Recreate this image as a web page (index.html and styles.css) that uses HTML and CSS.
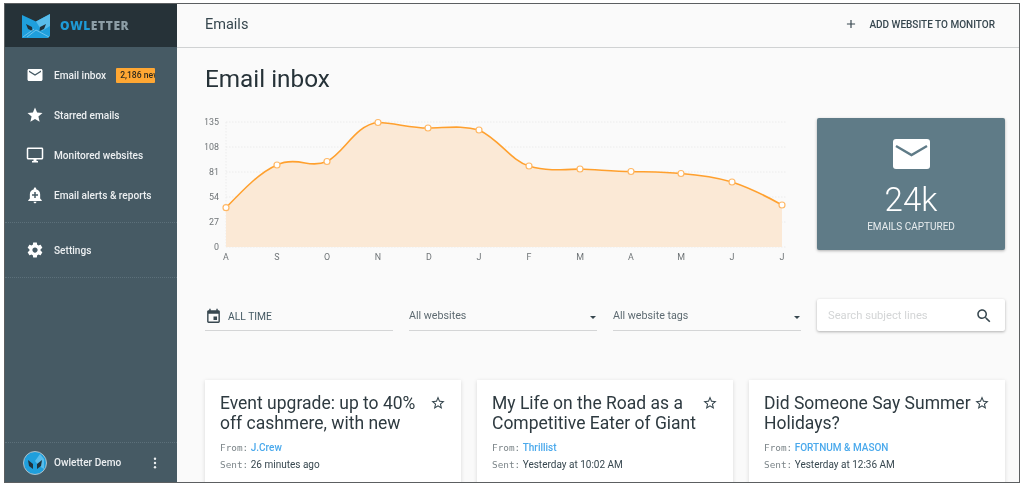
FILE: index.html
```html
<!DOCTYPE html>
<html lang="en">
<head>
    <meta charset="UTF-8">
    <meta name="viewport" content="width=device-width, initial-scale=1.0">
    <title>Owletter - Email inbox</title>
    <link rel="stylesheet" href="styles.css">
</head>
<body>
    <div class="frame">
        <aside class="sidebar">
            <div class="brand">
                <svg class="brand-logo" viewBox="0 0 28 24">
                    <polygon points="0,1 14,7.5 28,0 28,22 26,24 0,24" fill="#1f9fdc"/>
                    <polygon points="14,7.5 28,0 28,12 20,17" fill="#58bdec"/>
                    <polygon points="4,10 10,13 10.5,17 6,15" fill="#21323b"/>
                    <polygon points="24,10 18,13 17.5,17 22,15" fill="#21323b"/>
                    <path d="M1 23 L12 15 M5 23 L14 16 L27 23" fill="none" stroke="#8fd3f2" stroke-width=".7"/>
                </svg>
                <span class="brand-name"><b>OWL</b>ETTER</span>
            </div>
            <nav class="nav">
                <a class="nav-item">
                    <svg class="nav-icon" viewBox="0 0 24 24"><path d="M20 4H4c-1.1 0-1.99.9-1.99 2L2 18c0 1.1.9 2 2 2h16c1.1 0 2-.9 2-2V6c0-1.1-.9-2-2-2zm0 4l-8 5-8-5V6l8 5 8-5v2z"/></svg>
                    <span>Email inbox</span>
                    <span class="badge">2,186 new</span>
                </a>
                <a class="nav-item">
                    <svg class="nav-icon" viewBox="0 0 24 24"><path d="M12 17.27L18.18 21l-1.64-7.03L22 9.24l-7.19-.61L12 2 9.19 8.63 2 9.24l5.46 4.73L5.82 21z"/></svg>
                    <span>Starred emails</span>
                </a>
                <a class="nav-item">
                    <svg class="nav-icon" viewBox="0 0 24 24"><path d="M21 2H3c-1.1 0-2 .9-2 2v12c0 1.1.9 2 2 2h7v2H8v2h8v-2h-2v-2h7c1.1 0 2-.9 2-2V4c0-1.1-.9-2-2-2zm0 14H3V4h18v12z"/></svg>
                    <span>Monitored websites</span>
                </a>
                <a class="nav-item">
                    <svg class="nav-icon" viewBox="0 0 24 24"><path d="M10.01 21.01c0 1.1.89 1.99 1.99 1.99s1.99-.89 1.99-1.99h-3.98zm8.87-4.19V11c0-3.25-2.25-5.97-5.29-6.69v-.72C13.59 2.71 12.88 2 12 2s-1.59.71-1.59 1.59v.72C7.37 5.03 5.12 7.75 5.12 11v5.82L3 18.94V20h18v-1.06l-2.12-2.12zM16 13.01h-3v3h-2v-3H8V11h3V8h2v3h3v2.01z"/></svg>
                    <span>Email alerts &amp; reports</span>
                </a>
            </nav>
            <nav class="nav nav-settings">
                <a class="nav-item">
                    <svg class="nav-icon" viewBox="0 0 24 24"><path d="M19.43 12.98c.04-.32.07-.64.07-.98s-.03-.66-.07-.98l2.11-1.65c.19-.15.24-.42.12-.64l-2-3.46c-.12-.22-.39-.3-.61-.22l-2.49 1c-.52-.4-1.08-.73-1.69-.98l-.38-2.65C14.46 2.18 14.25 2 14 2h-4c-.25 0-.46.18-.49.42l-.38 2.65c-.61.25-1.17.59-1.69.98l-2.49-1c-.23-.09-.49 0-.61.22l-2 3.46c-.13.22-.07.49.12.64l2.11 1.65c-.04.32-.07.65-.07.98s.03.66.07.98l-2.11 1.65c-.19.15-.24.42-.12.64l2 3.46c.12.22.39.3.61.22l2.49-1c.52.4 1.08.73 1.69.98l.38 2.65c.03.24.24.42.49.42h4c.25 0 .46-.18.49-.42l.38-2.65c.61-.25 1.17-.59 1.69-.98l2.49 1c.23.09.49 0 .61-.22l2-3.46c.12-.22.07-.49-.12-.64l-2.11-1.65zM12 15.5c-1.93 0-3.5-1.57-3.5-3.5s1.57-3.5 3.5-3.5 3.5 1.57 3.5 3.5-1.57 3.5-3.5 3.5z"/></svg>
                    <span>Settings</span>
                </a>
            </nav>
            <div class="account">
                <svg class="avatar" viewBox="0 0 24 24">
                    <circle cx="12" cy="12" r="11.5" fill="#1f9fdc" stroke="#b0bec5"/>
                    <polygon points="12,10 17,3 21,8 21,18 16,15" fill="#58bdec"/>
                    <polygon points="5,9 10,13 10,18 6,15" fill="#21323b"/>
                    <polygon points="19,9 14,13 14,18 18,15" fill="#21323b"/>
                </svg>
                <span class="account-name">Owletter Demo</span>
                <svg class="account-more" viewBox="0 0 4 14"><circle cx="2" cy="2" r="1.4"/><circle cx="2" cy="7" r="1.4"/><circle cx="2" cy="12" r="1.4"/></svg>
            </div>
        </aside>

        <main class="main">
            <header class="topbar">
                <div class="topbar-title">Emails</div>
                <a class="topbar-action">
                    <svg class="topbar-plus" viewBox="0 0 24 24"><path d="M19 13h-6v6h-2v-6H5v-2h6V5h2v6h6v2z"/></svg>
                    ADD WEBSITE TO MONITOR
                </a>
            </header>

            <div class="content">
                <h1 class="page-title">Email inbox</h1>

                <section class="stats-row">
                    <svg class="chart" width="585" height="156" viewBox="205 110 585 156">
                        <g class="chart-grid">
                            <line x1="226" x2="786" y1="122" y2="122"/>
                            <line x1="226" x2="786" y1="147" y2="147"/>
                            <line x1="226" x2="786" y1="172" y2="172"/>
                            <line x1="226" x2="786" y1="197" y2="197"/>
                            <line x1="226" x2="786" y1="222" y2="222"/>
                            <line x1="226" x2="786" y1="247" y2="247"/>
                            <line x1="226" x2="226" y1="122" y2="247"/>
                        </g>
                        <path class="chart-area" d="M226 207.7 C243 190 260 172 277 165 C285 161 295 161 305 163 C313 164.5 320 164.5 327 161.5 C345 152 355 125 378 122.5 C395 123 410 128 428 128 C445 128 462 125 479 130 C500 140 510 160 529 166 C545 171 560 170 580 169 C597 169.5 614 171.5 631 171.5 C648 172 665 172 681 173.5 C700 175 715 177 732 182 C750 188 766 196 782 205 L782 247 L226 247 Z"/>
                        <path class="chart-line" d="M226 207.7 C243 190 260 172 277 165 C285 161 295 161 305 163 C313 164.5 320 164.5 327 161.5 C345 152 355 125 378 122.5 C395 123 410 128 428 128 C445 128 462 125 479 130 C500 140 510 160 529 166 C545 171 560 170 580 169 C597 169.5 614 171.5 631 171.5 C648 172 665 172 681 173.5 C700 175 715 177 732 182 C750 188 766 196 782 205"/>
                        <g class="chart-dots">
                            <circle cx="226" cy="207.7" r="3"/>
                            <circle cx="277" cy="165" r="3"/>
                            <circle cx="327" cy="161.5" r="3"/>
                            <circle cx="378" cy="122.5" r="3"/>
                            <circle cx="428" cy="128" r="3"/>
                            <circle cx="479" cy="130" r="3"/>
                            <circle cx="529" cy="166" r="3"/>
                            <circle cx="580" cy="169" r="3"/>
                            <circle cx="631" cy="171.5" r="3"/>
                            <circle cx="681" cy="173.5" r="3"/>
                            <circle cx="732" cy="182" r="3"/>
                            <circle cx="782" cy="205" r="3"/>
                        </g>
                        <g class="chart-y">
                            <text x="219" y="125">135</text>
                            <text x="219" y="150">108</text>
                            <text x="219" y="175">81</text>
                            <text x="219" y="200">54</text>
                            <text x="219" y="225">27</text>
                            <text x="219" y="250">0</text>
                        </g>
                        <g class="chart-x">
                            <text x="226" y="260">A</text>
                            <text x="277" y="260">S</text>
                            <text x="327" y="260">O</text>
                            <text x="378" y="260">N</text>
                            <text x="429" y="260">D</text>
                            <text x="479" y="260">J</text>
                            <text x="529" y="260">F</text>
                            <text x="580" y="260">M</text>
                            <text x="631" y="260">A</text>
                            <text x="681" y="260">M</text>
                            <text x="732" y="260">J</text>
                            <text x="782" y="260">J</text>
                        </g>
                    </svg>
                    <div class="stat-card">
                        <svg class="stat-icon" viewBox="0 0 37 30">
                            <rect width="37" height="30" rx="3" fill="#fff"/>
                            <path d="M3 7 L18.5 16 L34 7" fill="none" stroke="#5f7b87" stroke-width="2.4"/>
                        </svg>
                        <div class="stat-value">24k</div>
                        <div class="stat-label">EMAILS CAPTURED</div>
                    </div>
                </section>

                <section class="filters">
                    <div class="filter filter-date">
                        <svg class="filter-icon" viewBox="0 0 24 24"><path d="M17 12h-5v5h5v-5zM16 1v2H8V1H6v2H5c-1.11 0-1.99.9-1.99 2L3 19c0 1.1.89 2 2 2h14c1.1 0 2-.9 2-2V5c0-1.1-.9-2-2-2h-1V1h-2zm3 18H5V8h14v11z"/></svg>
                        ALL TIME
                    </div>
                    <div class="filter filter-select">All websites<span class="caret"></span></div>
                    <div class="filter filter-select">All website tags<span class="caret"></span></div>
                    <div class="search">
                        <input class="search-input" type="text" placeholder="Search subject lines">
                        <svg class="search-icon" viewBox="0 0 24 24"><path d="M15.5 14h-.79l-.28-.27C15.41 12.59 16 11.11 16 9.5 16 5.91 13.09 3 9.5 3S3 5.91 3 9.5 5.91 16 9.5 16c1.61 0 3.09-.59 4.23-1.57l.27.28v.79l5 4.99L20.49 19l-4.99-5zm-6 0C7.01 14 5 11.99 5 9.5S7.01 5 9.5 5 14 7.01 14 9.5 11.99 14 9.5 14z"/></svg>
                    </div>
                </section>

                <section class="cards">
                    <article class="card">
                        <div class="card-head">
                            <h2 class="card-title">Event upgrade: up to 40% off cashmere, with new</h2>
                            <svg class="card-star" viewBox="0 0 24 24"><path d="M22 9.24l-7.19-.62L12 2 9.19 8.63 2 9.24l5.46 4.73L5.82 21 12 17.27 18.18 21l-1.63-7.03L22 9.24zM12 15.4l-3.76 2.27 1-4.28-3.32-2.88 4.38-.38L12 6.1l1.71 4.04 4.38.38-3.32 2.88 1 4.28L12 15.4z"/></svg>
                        </div>
                        <div class="card-meta"><span class="meta-key">From:</span> <a class="meta-link">J.Crew</a></div>
                        <div class="card-meta"><span class="meta-key">Sent:</span> 26 minutes ago</div>
                    </article>
                    <article class="card">
                        <div class="card-head">
                            <h2 class="card-title">My Life on the Road as a Competitive Eater of Giant</h2>
                            <svg class="card-star" viewBox="0 0 24 24"><path d="M22 9.24l-7.19-.62L12 2 9.19 8.63 2 9.24l5.46 4.73L5.82 21 12 17.27 18.18 21l-1.63-7.03L22 9.24zM12 15.4l-3.76 2.27 1-4.28-3.32-2.88 4.38-.38L12 6.1l1.71 4.04 4.38.38-3.32 2.88 1 4.28L12 15.4z"/></svg>
                        </div>
                        <div class="card-meta"><span class="meta-key">From:</span> <a class="meta-link">Thrillist</a></div>
                        <div class="card-meta"><span class="meta-key">Sent:</span> Yesterday at 10:02 AM</div>
                    </article>
                    <article class="card">
                        <div class="card-head">
                            <h2 class="card-title">Did Someone Say Summer Holidays?</h2>
                            <svg class="card-star" viewBox="0 0 24 24"><path d="M22 9.24l-7.19-.62L12 2 9.19 8.63 2 9.24l5.46 4.73L5.82 21 12 17.27 18.18 21l-1.63-7.03L22 9.24zM12 15.4l-3.76 2.27 1-4.28-3.32-2.88 4.38-.38L12 6.1l1.71 4.04 4.38.38-3.32 2.88 1 4.28L12 15.4z"/></svg>
                        </div>
                        <div class="card-meta"><span class="meta-key">From:</span> <a class="meta-link">FORTNUM &amp; MASON</a></div>
                        <div class="card-meta"><span class="meta-key">Sent:</span> Yesterday at 12:36 AM</div>
                    </article>
                </section>
            </div>
        </main>
    </div>
</body>
</html>
```

FILE: styles.css
```css
html,
body {
    height: 100%;
}

body {
    margin: 0;
    padding: 3px 4px 5px;
    box-sizing: border-box;
    overflow: hidden;
    background-color: #fff;
    font-family: Roboto, "Liberation Sans", sans-serif;
}

.frame {
    display: flex;
    width: 1016px;
    height: 480px;
    box-sizing: border-box;
    border: 1px solid #5c5f61;
    overflow: hidden;
    background-color: #fafafa;
    filter: blur(0.6px);
}

/* sidebar */
.sidebar {
    display: flex;
    flex-direction: column;
    flex: none;
    width: 172px;
    background-color: #465a64;
    color: #eceff1;
}

.brand {
    display: flex;
    align-items: center;
    flex: none;
    height: 43px;
    padding-left: 17px;
    background-color: #263238;
}

.brand-logo {
    width: 28px;
    height: 24px;
}

.brand-name {
    margin-left: 10px;
    font-family: "Open Sans", Roboto, sans-serif;
    font-size: 12px;
    font-weight: 800;
    letter-spacing: 0.6px;
    color: #8d9ea6;
}

.brand-name b {
    font-weight: 800;
    color: #1e9ad6;
}

.nav {
    padding: 8px 0 7px;
    border-bottom: 1px dotted #5c707a;
}

.nav-settings {
    padding: 7px 0 7px;
}

.nav-item {
    display: flex;
    align-items: center;
    height: 40px;
    padding-left: 21px;
    font-size: 10.1px;
    font-weight: 500;
}

.nav-icon {
    flex: none;
    width: 18px;
    height: 18px;
    margin-right: 10px;
    fill: #fff;
}

.badge {
    width: 35px;
    height: 15px;
    margin-left: 10px;
    padding-left: 4px;
    overflow: hidden;
    border-radius: 1px;
    background-color: #ffa733;
    color: #2e2a1e;
    font-size: 8.6px;
    line-height: 15px;
    white-space: nowrap;
}

.account {
    display: flex;
    align-items: center;
    margin-top: auto;
    height: 39px;
    padding-left: 18px;
    border-top: 1px dotted #5c707a;
}

.avatar {
    width: 24px;
    height: 24px;
    margin-right: 7px;
}

.account-name {
    font-size: 10.1px;
    font-weight: 500;
}

.account-more {
    width: 4px;
    height: 12px;
    margin-left: 32px;
    fill: #eceff1;
}

/* main column */
.main {
    flex: 1;
    min-width: 0;
}

.topbar {
    display: flex;
    align-items: center;
    justify-content: space-between;
    height: 43px;
    padding: 0 24px 0 28px;
    border-bottom: 1px solid #d0d2d3;
}

.topbar-title {
    margin-bottom: 2px;
    font-size: 14.5px;
    color: #37474f;
}

.topbar-action {
    display: flex;
    align-items: center;
    margin-bottom: 3px;
    font-size: 10px;
    font-weight: 500;
    color: #37474f;
}

.topbar-plus {
    width: 14px;
    height: 14px;
    margin-right: 11px;
    fill: #37474f;
}

.content {
    padding: 16px 13px 0 28px;
}

.page-title {
    margin: 0;
    font-size: 24.3px;
    font-weight: 400;
    line-height: 30px;
    color: #263238;
}

.stats-row {
    display: flex;
    margin-top: 16px;
}

.chart {
    flex: none;
}

.chart-grid line {
    stroke: #e9e9e9;
    stroke-width: 0.8;
    stroke-dasharray: 1.5 1.5;
}

.chart-area {
    fill: #fbe9d6;
}

.chart-line {
    fill: none;
    stroke: #ffa02e;
    stroke-width: 1.6;
}

.chart-dots circle {
    fill: #fff;
    stroke: #ffb866;
    stroke-width: 1.2;
}

.chart-y text,
.chart-x text {
    font-size: 8.9px;
    fill: #6f7477;
}

.chart-y text {
    text-anchor: end;
}

.chart-x text {
    text-anchor: middle;
}

.stat-card {
    display: flex;
    flex-direction: column;
    align-items: center;
    width: 188px;
    height: 132px;
    box-sizing: border-box;
    margin: 8px 0 0 27px;
    padding-top: 21px;
    border-radius: 2px;
    background-color: #5f7b87;
    box-shadow: 0 1px 3px rgba(0, 0, 0, 0.3);
    color: #fff;
}

.stat-icon {
    width: 37px;
    height: 30px;
}

.stat-value {
    margin-top: 12px;
    font-size: 33px;
    font-weight: 300;
    line-height: 38px;
}

.stat-label {
    margin-top: 2px;
    font-size: 10px;
    line-height: 12px;
    color: #e8edef;
}

/* filters */
.filters {
    display: grid;
    grid-template-columns: repeat(4, 188px);
    gap: 16px;
    height: 32px;
    margin-top: 33px;
}

.filter {
    position: relative;
    display: flex;
    align-items: center;
    box-sizing: border-box;
    border-bottom: 1px solid #d4d5d6;
    font-size: 10.7px;
    color: #5d6a71;
}

.filter-date {
    padding-top: 3px;
    font-size: 10.3px;
    color: #455a64;
}

.filter-icon {
    width: 17px;
    height: 17px;
    margin: 0 6px 0 0;
    fill: #37474f;
}

.filter-select {
    padding-top: 1px;
}

.caret {
    position: absolute;
    right: 1px;
    top: 17px;
    border: 3px solid transparent;
    border-top-color: #37474f;
    border-bottom-width: 0;
}

.search {
    display: flex;
    align-items: center;
    justify-content: space-between;
    padding: 0 12px 0 11px;
    border-radius: 2px;
    background-color: #fff;
    box-shadow: 0 1px 3px rgba(0, 0, 0, 0.3);
}

.search-input {
    width: 130px;
    padding: 0;
    border: 0;
    outline: 0;
    background: transparent;
    font-family: inherit;
    font-size: 11.2px;
}

.search-input::placeholder {
    color: #d3d5d6;
}

.search-icon {
    width: 18px;
    height: 18px;
    margin-top: 1px;
    fill: #37474f;
}

/* email cards */
.cards {
    display: grid;
    grid-template-columns: repeat(3, 256px);
    gap: 16px;
    margin-top: 49px;
}

.card {
    height: 130px;
    box-sizing: border-box;
    padding: 14px 15px 0;
    background-color: #fff;
    box-shadow: 0 1px 4px rgba(0, 0, 0, 0.14);
}

.card-head {
    display: flex;
    justify-content: space-between;
    height: 45px;
}

.card-title {
    margin: 0;
    width: 209px;
    font-size: 17.5px;
    font-weight: 400;
    line-height: 19.5px;
    color: #2e3a40;
}

.card-star {
    flex: none;
    width: 16px;
    height: 16px;
    margin-top: 1px;
    fill: #37474f;
}

.card-meta {
    font-size: 10px;
    line-height: 17.4px;
    color: #37474f;
}

.meta-key {
    font-family: "DejaVu Sans Mono", "Liberation Mono", monospace;
    font-size: 9.4px;
    color: #7c8589;
}

.meta-link {
    font-weight: 500;
    color: #4aa9ec;
}
```
